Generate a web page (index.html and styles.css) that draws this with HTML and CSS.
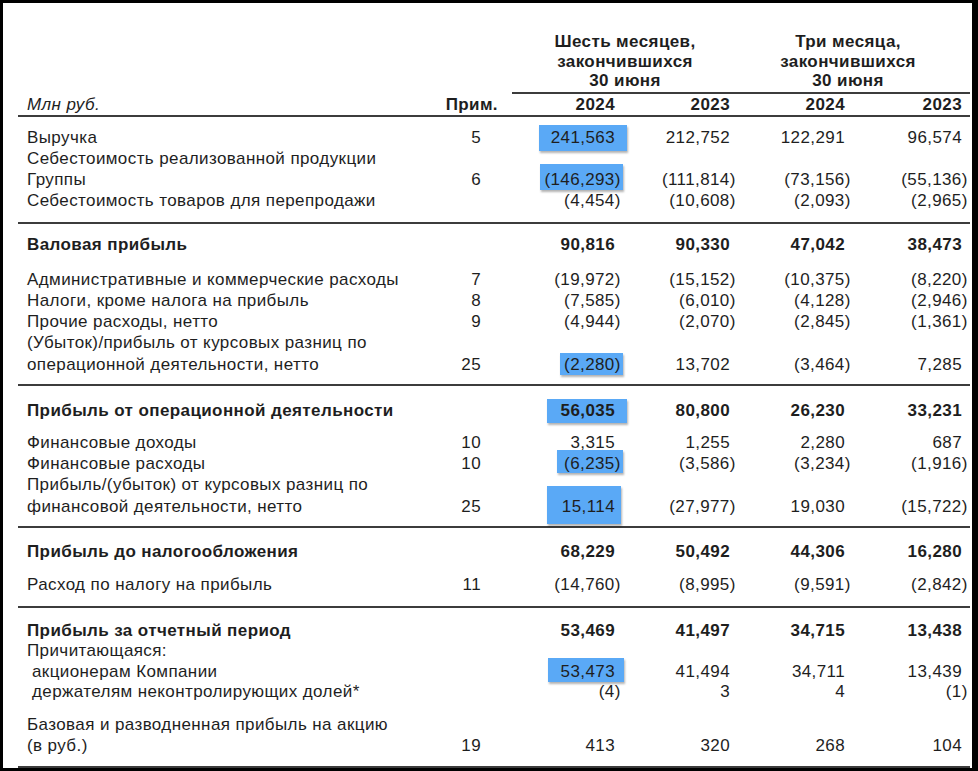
FILE: index.html
```html
<!DOCTYPE html>
<html lang="ru">
<head>
<meta charset="utf-8">
<title>Отчет о прибылях и убытках</title>
<link rel="stylesheet" href="styles.css">
</head>
<body>
<div class="frame">
<table class="pl">
<colgroup>
<col class="c-label"><col class="c-prim"><col class="c-n1"><col class="c-n2"><col class="c-n3"><col class="c-n4">
</colgroup>
<thead>
<tr class="grp">
<th></th><th></th>
<th colspan="2"><div class="grp-box grp-6m">Шесть месяцев,<br>закончившихся<br>30 июня</div></th>
<th colspan="2"><div class="grp-box grp-3m"><span class="grp-text">Три месяца,<br>закончившихся<br>30 июня</span></div></th>
</tr>
<tr class="years">
<th class="lbl unit">Млн руб.</th>
<th class="prim-h">Прим.</th>
<th class="num">2024</th><th class="num">2023</th><th class="num">2024</th><th class="num">2023</th>
</tr>
</thead>
<tbody class="sec s-a">
<tr class="first"><td class="lbl">Выручка</td><td class="prim">5</td><td class="num"><span class="v"><span class="hl hl1"></span>241,563</span></td><td class="num">212,752</td><td class="num">122,291</td><td class="num">96,574</td></tr>
<tr><td class="lbl">Себестоимость реализованной продукции<br>Группы</td><td class="prim">6</td><td class="num"><span class="v neg"><span class="hl hl2"></span>(146,293)</span></td><td class="num"><span class="neg">(111,814)</span></td><td class="num"><span class="neg">(73,156)</span></td><td class="num"><span class="neg">(55,136)</span></td></tr>
<tr class="last"><td class="lbl">Себестоимость товаров для перепродажи</td><td class="prim"></td><td class="num"><span class="neg">(4,454)</span></td><td class="num"><span class="neg">(10,608)</span></td><td class="num"><span class="neg">(2,093)</span></td><td class="num"><span class="neg">(2,965)</span></td></tr>
</tbody>
<tbody class="sec s-b">
<tr class="first total gap-after"><td class="lbl">Валовая прибыль</td><td class="prim"></td><td class="num">90,816</td><td class="num">90,330</td><td class="num">47,042</td><td class="num">38,473</td></tr>
<tr><td class="lbl">Административные и коммерческие расходы</td><td class="prim">7</td><td class="num"><span class="neg">(19,972)</span></td><td class="num"><span class="neg">(15,152)</span></td><td class="num"><span class="neg">(10,375)</span></td><td class="num"><span class="neg">(8,220)</span></td></tr>
<tr><td class="lbl">Налоги, кроме налога на прибыль</td><td class="prim">8</td><td class="num"><span class="neg">(7,585)</span></td><td class="num"><span class="neg">(6,010)</span></td><td class="num"><span class="neg">(4,128)</span></td><td class="num"><span class="neg">(2,946)</span></td></tr>
<tr><td class="lbl">Прочие расходы, нетто</td><td class="prim">9</td><td class="num"><span class="neg">(4,944)</span></td><td class="num"><span class="neg">(2,070)</span></td><td class="num"><span class="neg">(2,845)</span></td><td class="num"><span class="neg">(1,361)</span></td></tr>
<tr class="last"><td class="lbl">(Убыток)/прибыль от курсовых разниц по<br>операционной деятельности, нетто</td><td class="prim">25</td><td class="num"><span class="v neg"><span class="hl hl3"></span>(2,280)</span></td><td class="num">13,702</td><td class="num"><span class="neg">(3,464)</span></td><td class="num">7,285</td></tr>
</tbody>
<tbody class="sec s-c">
<tr class="first total gap-after"><td class="lbl">Прибыль от операционной деятельности</td><td class="prim"></td><td class="num"><span class="v"><span class="hl hl4"></span>56,035</span></td><td class="num">80,800</td><td class="num">26,230</td><td class="num">33,231</td></tr>
<tr><td class="lbl">Финансовые доходы</td><td class="prim">10</td><td class="num">3,315</td><td class="num">1,255</td><td class="num">2,280</td><td class="num">687</td></tr>
<tr><td class="lbl">Финансовые расходы</td><td class="prim">10</td><td class="num"><span class="v neg"><span class="hl hl5"></span>(6,235)</span></td><td class="num"><span class="neg">(3,586)</span></td><td class="num"><span class="neg">(3,234)</span></td><td class="num"><span class="neg">(1,916)</span></td></tr>
<tr class="last"><td class="lbl">Прибыль/(убыток) от курсовых разниц по<br>финансовой деятельности, нетто</td><td class="prim">25</td><td class="num"><span class="v"><span class="hl hl6"></span>15,114</span></td><td class="num"><span class="neg">(27,977)</span></td><td class="num">19,030</td><td class="num"><span class="neg">(15,722)</span></td></tr>
</tbody>
<tbody class="sec s-d">
<tr class="first total gap-after"><td class="lbl">Прибыль до налогообложения</td><td class="prim"></td><td class="num">68,229</td><td class="num">50,492</td><td class="num">44,306</td><td class="num">16,280</td></tr>
<tr class="last"><td class="lbl">Расход по налогу на прибыль</td><td class="prim">11</td><td class="num"><span class="neg">(14,760)</span></td><td class="num"><span class="neg">(8,995)</span></td><td class="num"><span class="neg">(9,591)</span></td><td class="num"><span class="neg">(2,842)</span></td></tr>
</tbody>
<tbody class="sec s-e">
<tr class="first total"><td class="lbl">Прибыль за отчетный период</td><td class="prim"></td><td class="num">53,469</td><td class="num">41,497</td><td class="num">34,715</td><td class="num">13,438</td></tr>
<tr class="tight"><td class="lbl">Причитающаяся:</td><td class="prim"></td><td class="num"></td><td class="num"></td><td class="num"></td><td class="num"></td></tr>
<tr class="tight"><td class="lbl sub">акционерам Компании</td><td class="prim"></td><td class="num"><span class="v"><span class="hl hl7"></span>53,473</span></td><td class="num">41,494</td><td class="num">34,711</td><td class="num">13,439</td></tr>
<tr class="tight gap-after"><td class="lbl sub">держателям неконтролирующих долей*</td><td class="prim"></td><td class="num"><span class="neg">(4)</span></td><td class="num">3</td><td class="num">4</td><td class="num"><span class="neg">(1)</span></td></tr>
<tr class="last"><td class="lbl">Базовая и разводненная прибыль на акцию<br>(в руб.)</td><td class="prim">19</td><td class="num">413</td><td class="num">320</td><td class="num">268</td><td class="num">104</td></tr>
</tbody>
</table>
</div>
</body>
</html>
```
FILE: styles.css
```css
html, body {
  margin: 0;
  padding: 0;
  background: #ffffff;
}

.frame {
  box-sizing: border-box;
  width: 978px;
  height: 771px;
  border-style: solid;
  border-color: #000000;
  border-width: 3px 6px 3px 3px;
  padding: 29px 0 0 15px;
  font-family: "Liberation Sans", Arial, sans-serif;
  font-size: 17px;
  letter-spacing: 0.4px;
  color: #1e1e1e;
}

.pl {
  border-collapse: collapse;
  table-layout: fixed;
  width: 952px;
}

.c-label { width: 412px; }
.c-prim { width: 68px; }
.c-n1 { width: 125px; }
.c-n2 { width: 115px; }
.c-n3 { width: 115px; }
.c-n4 { width: 117px; }

.pl th, .pl td {
  padding: 0;
  line-height: 21.2px;
  vertical-align: bottom;
  white-space: nowrap;
}

.pl th { font-weight: bold; }

.grp th {
  line-height: 19.5px;
  text-align: center;
}

.grp-box {
  border-bottom: 2px solid #3c3c3c;
  padding-bottom: 1px;
}

.grp-6m { margin-left: 14px; }
.grp-3m { padding-right: 12px; }
.grp-text { display: block; }

.years th { border-bottom: 2px solid #3c3c3c; padding-bottom: 0; }

.lbl {
  text-align: left;
  padding-left: 9px !important;
}

.unit {
  font-weight: normal !important;
  font-style: italic;
}

.prim-h { text-align: right; }

.prim {
  text-align: right;
  padding-right: 17px !important;
}

.num {
  text-align: right;
  padding-right: 8px !important;
}

.neg { margin-right: -0.34em; }

.sub { padding-left: 14px !important; }

.total td { font-weight: bold; }

.sec .last td { border-bottom: 2px solid #3c3c3c; }

.s-a .first td { padding-top: 10px; }
.s-a .last td { padding-bottom: 10px; }

.s-b .first td { padding-top: 10px; }
.s-b .last td { padding-bottom: 9px; }

.s-c .first td { padding-top: 14px; }
.s-c .last td { padding-bottom: 9px; }

.s-d .first td { padding-top: 13px; }
.s-d .last td { padding-bottom: 11px; }

.s-e .first td { padding-top: 12px; }
.s-e .last td { padding-bottom: 10px; }

.s-e .tight td { line-height: 20.5px; }

.gap-after td { padding-bottom: 12px; }
.s-b .gap-after td { padding-bottom: 14px; }
.s-c .gap-after td { padding-bottom: 11px; }
.s-e .gap-after td { padding-bottom: 11px; }

.v {
  position: relative;
  z-index: 0;
  display: inline-block;
}

.hl {
  position: absolute;
  z-index: -1;
  background: #5aa9f6;
  box-shadow: 1px 2px 2px rgba(0, 0, 0, 0.3);
}

.hl1 { left: -12px; right: -12px; top: -2px; bottom: -3px; }
.hl2 { left: -4px; right: -2px; top: -5px; bottom: 0; }
.hl3 { left: -4px; right: -2px; top: -1px; bottom: 0; }
.hl4 { left: -14px; right: -12px; top: -1px; bottom: -2px; }
.hl5 { left: -7px; right: -2px; top: -3px; bottom: 1px; }
.hl6 { left: -15px; right: -6px; top: -10px; bottom: -7px; }
.hl7 { left: -13px; right: -9px; top: -4px; bottom: 0; }
```
